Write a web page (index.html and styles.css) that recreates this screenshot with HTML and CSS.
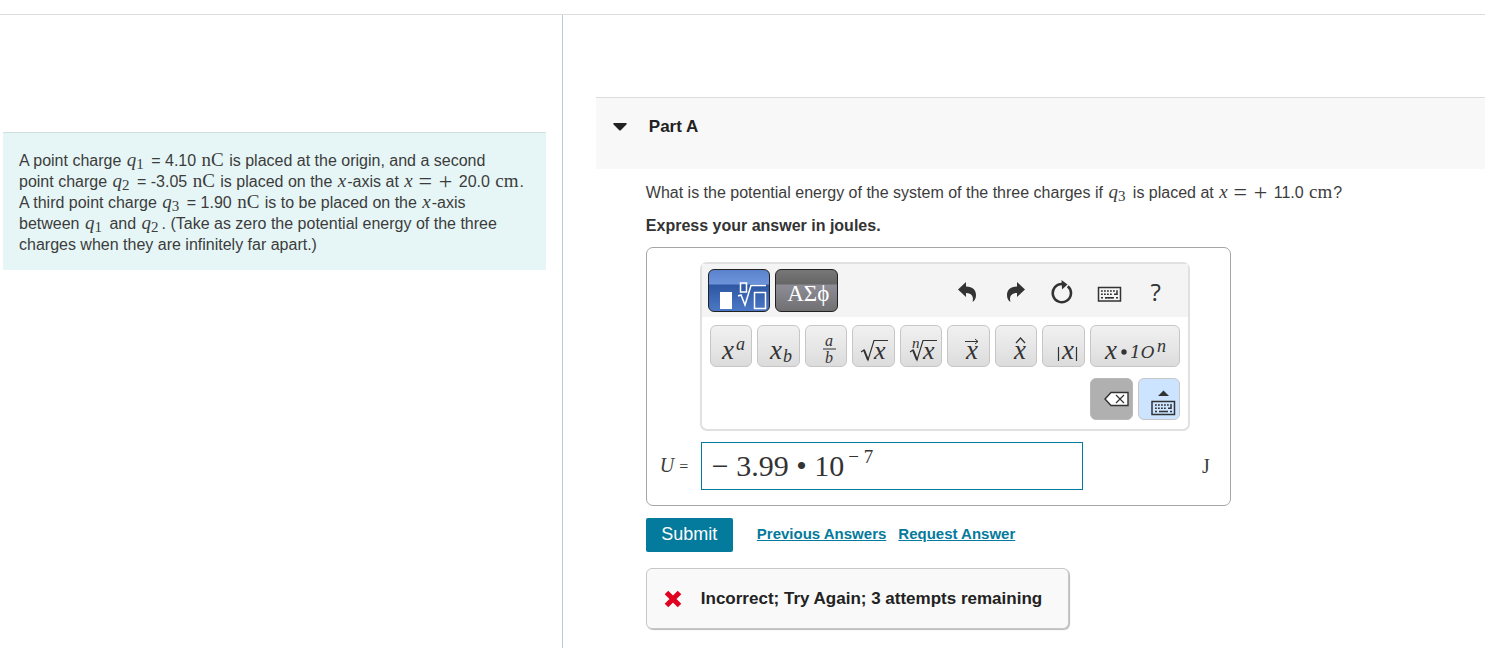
FILE: index.html
```html
<!DOCTYPE html>
<html lang="en">
<head>
<meta charset="utf-8">
<title>Part A</title>
<meta name="viewport" content="width=device-width, initial-scale=1">
<link rel="stylesheet" href="styles.css">
</head>
<body>
<div class="split">
  <aside class="left-pane">
    <p class="problem">A point charge <span class="math"><i>q</i><sub>1</sub></span> = 4.10 <span class="math">nC</span> is placed at the origin, and a second<br>point charge <span class="math"><i>q</i><sub>2</sub></span> = -3.05 <span class="math">nC</span> is placed on the <i class="math">x</i>-axis at <span class="math"><i>x</i> <span class="op">=</span> <span class="op">+</span></span> 20.0 <span class="math">cm</span>.<br>A third point charge <span class="math"><i>q</i><sub>3</sub></span> = 1.90 <span class="math">nC</span> is to be placed on the <i class="math">x</i>-axis<br>between <span class="math"><i>q</i><sub>1</sub></span> and <span class="math"><i>q</i><sub>2</sub></span>. (Take as zero the potential energy of the three<br>charges when they are infinitely far apart.)</p>
  </aside>

  <main class="right-pane">
    <header class="part-header">
      <svg class="caret" viewBox="0 0 14 8" aria-hidden="true"><path d="M1 0h12q1.200 .4.4 1.500L8 7q-1 1-2 0L.6 1.500Q-.2.4 1 0z"/></svg>
      <h2 class="part-title">Part A</h2>
    </header>

    <section class="part-body">
      <p class="question">What is the potential energy of the system of the three charges if <span class="math"><i>q</i><sub>3</sub></span> is placed at <span class="math"><i>x</i> <span class="op">=</span> <span class="op">+</span></span> 11.0 <span class="math">cm</span>?</p>
      <p class="instruction">Express your answer in joules.</p>

      <div class="answer-box">
        <div class="toolbar">
          <div class="toolbar-top">
            <button class="tab tab-blue" type="button" aria-label="Templates">
              <svg width="50" height="32" viewBox="0 0 50 32" fill="none" stroke="#fff"><path d="M3 13h12v17H3z" fill="#fff" stroke="none"/><path d="M23.500 4h6v9h-6z" stroke-width="1.500"/><path d="M21 17l3-1 4 10 6-19.500h15" stroke-width="1.500"/><path d="M37.500 13.500h11v16h-11z" stroke-width="1.500"/></svg>
            </button>
            <button class="tab tab-gray" type="button">ΑΣϕ</button>
            <div class="tools">
              <button class="tool" type="button" aria-label="Undo"><svg width="20" height="22" viewBox="0 0 20 22"><path d="M0 8.500L8 1v4.500c7 0 10 4 10 8.500 0 3-1 5.500-3.500 7 1.500-5-.5-9-6.500-9V16z"/></svg></button>
              <button class="tool" type="button" aria-label="Redo"><svg width="20" height="22" viewBox="0 0 20 22"><path d="M19 8.500L11 1v4.500C4 5.500 1 9.500 1 14c0 3 1 5.500 3.500 7-1.500-5 .5-9 6.500-9V16z"/></svg></button>
              <button class="tool tool-reset" type="button" aria-label="Reset"><svg width="24" height="24" viewBox="0 0 24 24"><path d="M17.800 6.200A9.100 9.100 0 1 1 12 4" fill="none" stroke="#333" stroke-width="2.600"/><path d="M11.500 0l6 4.500-5.500 5z"/></svg></button>
              <button class="tool tool-keyboard" type="button" aria-label="Keyboard shortcuts"><svg width="25" height="17" viewBox="0 0 25 17"><path d="M1.500 1.500h22v13.500h-22z" fill="none" stroke="#333" stroke-width="1.500"/><path d="M4 5h14M4 8.200h12M8 11.800h9" fill="none" stroke="#333" stroke-width="1.600" stroke-dasharray="1.800 1.200"/><path d="M20 4.200v4h-3M4 11.800h2M8 11.800h9M19 11.800h2" fill="none" stroke="#333" stroke-width="1.500"/></svg></button>
              <button class="tool tool-help" type="button" aria-label="Help">?</button>
            </div>
          </div>

          <div class="keys">
            <button class="key" type="button" aria-label="Superscript"><svg width="42" height="40" viewBox="0 0 42 40"><text x="11" y="33" font-size="27">x</text><text x="25" y="24" font-size="18">a</text></svg></button>
            <button class="key" type="button" aria-label="Subscript"><svg width="42" height="40" viewBox="0 0 42 40"><text x="12" y="33" font-size="27">x</text><text x="25" y="36" font-size="18">b</text></svg></button>
            <button class="key" type="button" aria-label="Fraction"><svg width="42" height="40" viewBox="0 0 42 40"><text x="19" y="20" font-size="16">a</text><path d="M17 23h13" stroke-width="1"/><text x="19" y="37" font-size="16">b</text></svg></button>
            <button class="key" type="button" aria-label="Square root"><svg width="42" height="40" viewBox="0 0 42 40"><path d="M8 26l3-2 4 10 6-19.500h14" stroke-width="1.200"/><path d="M11 24l4 10" stroke-width="2"/><text x="21" y="33" font-size="26">x</text></svg></button>
            <button class="key" type="button" aria-label="Nth root"><svg width="42" height="40" viewBox="0 0 42 40"><path d="M9 26l3-2 4 10 6-19.500h14" stroke-width="1.200"/><path d="M12 24l4 10" stroke-width="2"/><text x="11" y="22" font-size="15">n</text><text x="22" y="33" font-size="26">x</text></svg></button>
            <button class="key" type="button" aria-label="Vector"><svg width="42" height="40" viewBox="0 0 42 40"><path d="M17 15.500h13M27 13l3 2.500-3 2.500" stroke-width="1"/><text x="18" y="33" font-size="27">x</text></svg></button>
            <button class="key" type="button" aria-label="Unit vector"><svg width="42" height="40" viewBox="0 0 42 40"><path d="M20 17l4.500-5 4.500 5" stroke-width="1.200"/><text x="18" y="33" font-size="27">x</text></svg></button>
            <button class="key" type="button" aria-label="Absolute value"><svg width="42" height="40" viewBox="0 0 42 40"><path d="M15.500 21v14M33.500 21v14" stroke-width="1.200"/><text x="19" y="33" font-size="27">x</text></svg></button>
            <button class="key" type="button" aria-label="Scientific notation"><svg width="88" height="40" viewBox="0 0 88 40"><text x="14" y="33" font-size="27">x</text><circle cx="33" cy="26" r="2.700" stroke="none" fill="#333"/><text x="39" y="32" font-size="17" class="wide">1O</text><text x="66" y="26" font-size="18">n</text></svg></button>
            <button class="key key-delete" type="button" aria-label="Delete"><svg width="42" height="40" viewBox="0 0 42 40"><path d="M14 20l6-6.500h17v13H20z" fill="#fff" stroke-width="1.400"/><path d="M25 16l8 8M33 16l-8 8" stroke-width="1.200"/></svg></button>
            <button class="key key-keyboard" type="button" aria-label="Show keyboard"><svg width="42" height="40" viewBox="0 0 42 40"><path d="M19 17l5.500-5.500 5.500 5.500z" fill="#333" stroke="none"/><path d="M13 22.500h22.500v13H13z" stroke-width="1.500"/><path d="M16 26h14M16 29.200h12" stroke-width="1.600" stroke-dasharray="1.800 1.200"/><path d="M32 25v4.200h-3M16 32.500h2M20 32.500h9M31 32.500h2" stroke-width="1.500"/></svg></button>
          </div>
        </div>

        <div class="answer-row">
          <span class="answer-label" id="answer-label"><i>U</i> <small>=</small></span>
          <div class="answer-field" role="textbox" contenteditable="true" aria-labelledby="answer-label">− 3.99 • 10<sup>− 7</sup></div>
          <span class="unit">J</span>
        </div>
      </div>

      <div class="actions">
        <button class="submit" type="button">Submit</button>
        <a href="#previous">Previous Answers</a>
        <a href="#request">Request Answer</a>
      </div>

      <div class="feedback" role="status">
        <svg width="18" height="18" viewBox="0 0 18 18" aria-hidden="true"><path d="M2.500 2.500l13 13M15.500 2.500l-13 13" stroke="#e0001f" stroke-width="5"/></svg>
        <span>Incorrect; Try Again; 3 attempts remaining</span>
      </div>
    </section>
  </main>
</div>
</body>
</html>
```
FILE: styles.css
```css
* { box-sizing: border-box; }

body {
  margin: 0;
  padding-top: 14px;
  background: #fff;
  color: #3c3c3c;
  font: 16px/21px "Liberation Sans", Arial, sans-serif;
}

p, h2 { margin: 0; }
button { font: inherit; color: inherit; margin: 0; padding: 0; cursor: pointer; }

.split {
  display: grid;
  grid-template-columns: 37.9% 1fr;
  min-height: calc(100vh - 14px);
  border-top: 1px solid #ddd;
}

.left-pane {
  padding: 117px 16px 0 3px;
  border-right: 1px solid #b9cad9;
}

.problem {
  padding: 17px 0 15px 16px;
  background: #e6f6f6;
  border-top: 1px solid #cfdede;
  white-space: nowrap;
}

.math {
  margin: 0 1px;
  font-family: "Liberation Serif", "Times New Roman", serif;
  font-size: 19px;
  line-height: 0;
  white-space: nowrap;
}
.math sub { margin-right: 2px; font-size: 15px; line-height: 0; vertical-align: -3px; }
.op { margin: 0 1px; font-size: 24px; vertical-align: -2px; }

.right-pane { padding: 82px 0 16px 33px; }

.part-header {
  display: flex;
  align-items: flex-start;
  gap: 22px;
  height: 72px;
  padding: 18px 17px;
  background: #f8f8f8;
  border-top: 1px solid #ddd;
}
.caret { width: 14px; height: 8px; margin-top: 7px; fill: #222; }
.part-title { font-size: 17px; line-height: 21px; color: #222; }

.part-body { padding: 13px 16px 0 50px; }
.instruction { margin-top: 12px; font-weight: bold; color: #333; }

.answer-box {
  max-width: 585px;
  margin-top: 11px;
  padding: 14px 13px 15px;
  border: 1px solid #a5a5a5;
  border-radius: 7px;
}

.toolbar {
  margin: 0 27px 0 40px;
  border: 2px solid #e0e0e0;
  border-radius: 7px;
}
.toolbar-top {
  display: flex;
  gap: 5px;
  padding: 5px 6px;
  background: #f4f4f4;
}
.tab {
  width: 63px;
  height: 43px;
  border: 1px solid #222;
  border-radius: 6px;
  color: #fff;
}
.tab svg { display: block; margin: 8px 0 0 8px; }
.tab-blue { width: 62px; background: linear-gradient(#5a82cc, #6d93da 14px, #2e57a3 15px, #4b78c6); }
.tab-gray {
  padding: 6px 0 0 4px;
  background: linear-gradient(#777, #666 14px, #8e8d96 15px, #707072);
  font: 23px/24px "Liberation Serif", serif;
}
.tools {
  flex: 1;
  display: flex;
  justify-content: flex-end;
  align-items: center;
  gap: 28px;
  padding: 2px 21px 0 0;
}
.tool { display: flex; border: 0; background: none; }
.tool svg { fill: #333; }
.tool-reset { margin-left: -4px; }
.tool-keyboard { margin: 5px 0 0 -5px; }
.tool-help { color: #333; font: 24px/24px "Open Sans", sans-serif; }

.keys {
  display: grid;
  grid-template-columns: repeat(8, 1fr) 43px 42px;
  gap: 11px 5px;
  padding: 8px 8px 9px;
}
.key {
  height: 42px;
  border: 1px solid #c6c6c6;
  border-radius: 6px;
  background: linear-gradient(#f1f1f1, #dcdcdc);
  overflow: hidden;
}
.key:nth-child(9) { grid-column: 9 / 11; }
.key svg { display: block; fill: none; stroke: #333; stroke-width: 1.5px; }
.key text {
  fill: #333;
  stroke: none;
  font-family: "Liberation Serif", serif;
  font-style: italic;
}
.key .wide { font-family: "DejaVu Serif", serif; }
.key-delete { grid-column: 9; background: #b0b0b0; border-color: #b8b8b8; }
.key-keyboard { background: #cce4ff; }

.answer-row {
  display: flex;
  align-items: center;
  margin-top: 11px;
  font-family: "Liberation Serif", "Times New Roman", serif;
}
.answer-label { width: 41px; font-size: 20px; }
.answer-label small { font-size: 16px; }
.answer-field {
  flex: 0 1 382px;
  height: 48px;
  padding: 7px 10px;
  border: 1px solid #047a9c;
  font-size: 30px;
  line-height: 32px;
  color: #333;
  white-space: nowrap;
}
.answer-field sup { padding-left: 4px; font-size: 19px; line-height: 0; vertical-align: 13px; }
.unit { margin: 0 7px 0 auto; font-size: 20px; }

.actions { display: flex; align-items: center; gap: 12px; margin-top: 12px; }
.submit {
  width: 87px;
  height: 34px;
  margin-right: 12px;
  padding-bottom: 2px;
  border: 0;
  border-radius: 2px;
  background: #047a9c;
  color: #fff;
  font-size: 18px;
}
.actions a { padding-bottom: 3px; color: #047a9c; font-size: 15px; font-weight: bold; }

.feedback {
  display: inline-flex;
  align-items: center;
  gap: 19px;
  height: 61px;
  margin-top: 16px;
  padding: 0 26px 0 17px;
  border: 1px solid #c7c7c7;
  border-radius: 6px;
  background: #f9f9f9;
  box-shadow: 1px 1px 1px #bbb;
  color: #222;
  font-size: 17px;
  font-weight: bold;
}
```
